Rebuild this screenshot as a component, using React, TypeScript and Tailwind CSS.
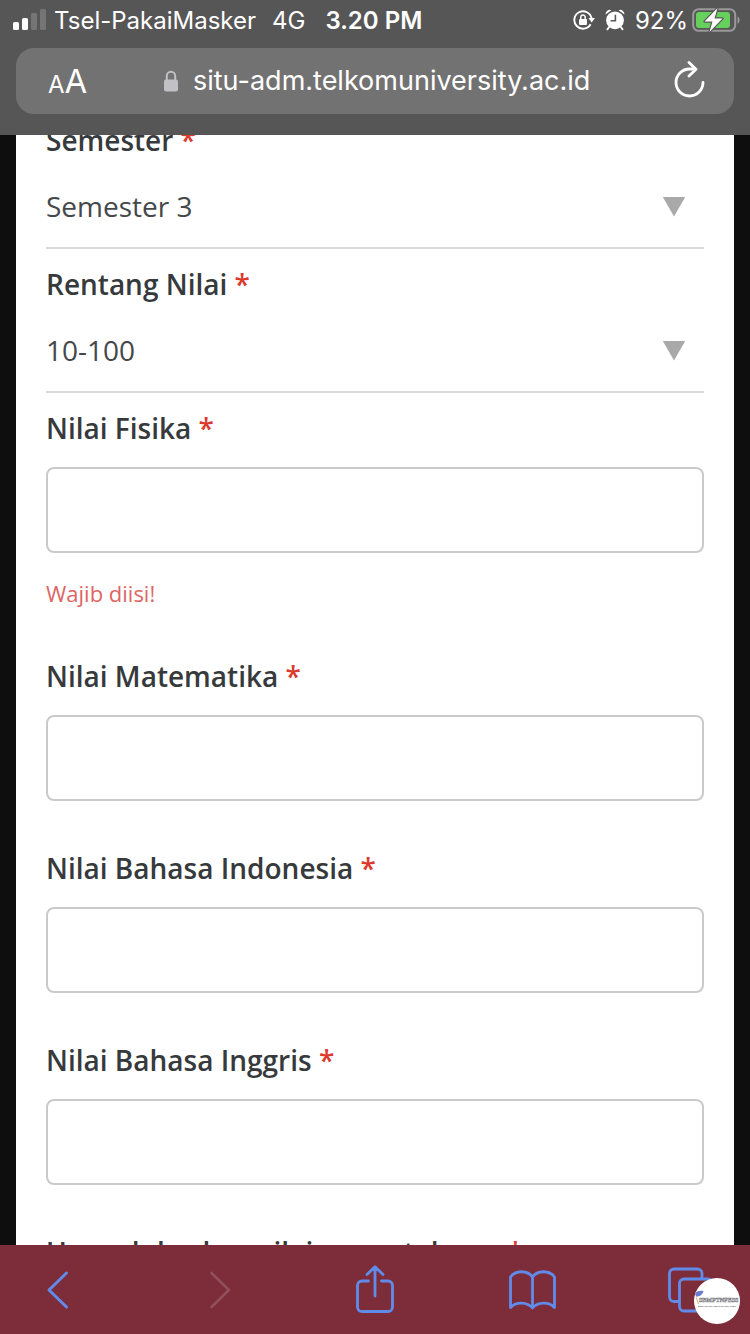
import React, { useState } from "react";

const labelClass = "block text-[28px] leading-[38px] font-semibold text-[#373a3c]";
const iconButton = "flex h-14 w-14 items-center justify-center";

function Required() {
  return <span className="text-[#dc3a2e]">*</span>;
}

function SelectField({ id, label, options }: { id: string; label: string; options: string[] }) {
  return (
    <div className="flex flex-col">
      <label htmlFor={id} className={labelClass}>
        {label} <Required />
      </label>
      <div className="relative mt-3 mb-4 border-b-2 border-[#dadada]">
        <select
          id={id}
          className="h-[76px] w-full appearance-none bg-transparent pb-1.5 text-[28px] text-[#45484b] outline-none"
        >
          {options.map((o) => (
            <option key={o}>{o}</option>
          ))}
        </select>
        <svg
          className="pointer-events-none absolute top-[26px] right-[18px]"
          width="24"
          height="20"
          viewBox="0 0 24 20"
          aria-hidden="true"
        >
          <path d="M.8 0h22.4L12 19.5z" fill="#a9a9a9" />
        </svg>
      </div>
    </div>
  );
}

function ScoreField({ id, label, error }: { id: string; label: string; error?: string }) {
  const [value, setValue] = useState("");
  return (
    <div className="mb-10 flex flex-col">
      <label htmlFor={id} className={labelClass}>
        {label} <Required />
      </label>
      <input
        id={id}
        value={value}
        onChange={(e) => setValue(e.target.value)}
        inputMode="numeric"
        className="mt-5 mb-2 h-[86px] w-full rounded-lg border-2 border-[#cacaca] bg-white px-5 text-[28px] text-[#45484b] outline-none"
      />
      {error && <p className="mt-4 mb-2 text-[22px] leading-8 text-[#dd6664]">{error}</p>}
    </div>
  );
}

function StatusBar() {
  return (
    <div className="flex h-10 items-center justify-between pr-2.5 pl-3 text-[24px] leading-10">
      <div className="flex items-center">
        <svg width="34" height="22" viewBox="0 0 34 22" className="mr-2" aria-label="Signal">
          <rect x="1" y="13" width="6" height="8" rx="1.5" fill="#fff" />
          <rect x="10" y="9" width="6" height="12" rx="1.5" fill="#fff" />
          <rect x="19" y="4" width="6" height="17" rx="1.5" fill="#757575" />
          <rect x="28" y="0" width="6" height="21" rx="1.5" fill="#757575" />
        </svg>
        <span className="pt-0.5">Tsel-PakaiMasker</span>
        <span className="ml-4 pt-0.5">4G</span>
        <span className="ml-5 pt-0.5 font-semibold">3.20 PM</span>
      </div>
      <div className="flex items-center">
        <svg width="22" height="22" viewBox="0 0 22 22" className="mr-2.5" aria-label="Rotation lock">
          <path d="M18.6 9.500A8.700 8.700 0 1 0 17.600 15.300" fill="none" stroke="#fff" strokeWidth="1.9" />
          <path d="M15.400 9h6.600l-3.300 4.600z" fill="#fff" />
          <rect x="6" y="10" width="8" height="6" rx="1" fill="#fff" />
          <path d="M7.800 10.500V8.300a2.200 2.200 0 0 1 4.400 0v2.200" fill="none" stroke="#fff" strokeWidth="1.500" />
        </svg>
        <svg width="20" height="22" viewBox="0 0 20 22" className="mr-2.5" aria-label="Alarm">
          <circle cx="10" cy="11.300" r="8.900" fill="#fff" />
          <path d="M.6 5.600A4.200 4.200 0 0 1 6.400 1.200zM19.400 5.600a4.200 4.200 0 0 0-5.800-4.400z" fill="#fff" />
          <path d="m4.200 18-1.800 2.400M15.800 18l1.800 2.400" stroke="#fff" strokeWidth="1.800" strokeLinecap="round" />
          <path d="M10.400 5.800v6H5.600" fill="none" stroke="#585857" strokeWidth="1.600" />
        </svg>
        <span className="pt-0.5">92%</span>
        <svg width="48" height="26" viewBox="0 0 48 26" className="ml-1" aria-label="Battery">
          <rect x="1.200" y="2.200" width="42" height="21.600" rx="5.500" fill="none" stroke="#99999b" strokeWidth="2" />
          <path d="M45.500 9.200c2.800 1.400 2.800 6.200 0 7.600z" fill="#99999b" />
          <rect x="4" y="5" width="34" height="16" rx="3" fill="#65d05c" />
          <path
            d="M25.500 1 12.500 14.500h8L17.500 25 30.500 11.500h-8z"
            fill="#fff"
            stroke="#585857"
            strokeWidth="2.400"
            paintOrder="stroke"
            strokeLinejoin="round"
          />
        </svg>
      </div>
    </div>
  );
}

function AddressBar() {
  return (
    <div className="px-4 pt-2 pb-[21px]">
      <div className="flex h-[66px] items-center justify-between rounded-[18px] bg-[#737272] pr-4 pl-8">
        <button type="button" aria-label="Text size" className="flex items-baseline pt-1 leading-10">
          <span className="text-[24px]">A</span>
          <span className="text-[33px]">A</span>
        </button>
        <div className="flex items-center gap-3.5 pl-1 text-[27px] leading-10">
          <svg width="16" height="22" viewBox="0 0 16 22" aria-label="Secure">
            <rect x="1" y="9.500" width="14" height="12" rx="2" fill="#c1c0c5" />
            <path d="M3.800 10V6a4.200 4.200 0 0 1 8.400 0v4" fill="none" stroke="#c1c0c5" strokeWidth="2" />
          </svg>
          <span>situ-adm.telkomuniversity.ac.id</span>
        </div>
        <button type="button" aria-label="Reload" className={iconButton}>
          <svg width="34" height="40" viewBox="0 0 34 40" fill="none" stroke="#fff" strokeWidth="2.800" strokeLinecap="round" strokeLinejoin="round">
            <path d="M30 21.500A13.500 13.500 0 1 1 16.500 8l6 .2" />
            <path d="M16 1.500 23 8.300l-7 6.800" />
          </svg>
        </button>
      </div>
    </div>
  );
}

function BottomBar() {
  return (
    <nav className="relative flex h-[89px] shrink-0 items-start justify-between bg-[#7d2d3a] px-[30px] pt-[17px] text-[#618be9]">
      <button type="button" aria-label="Back" className={iconButton}>
        <svg width="24" height="40" viewBox="0 0 24 40" fill="none" stroke="currentColor" strokeWidth="3" strokeLinecap="round" strokeLinejoin="round">
          <path d="M20.500 3 3 20l17.500 17" />
        </svg>
      </button>
      <button type="button" aria-label="Forward" disabled className={iconButton}>
        <svg width="28" height="40" viewBox="0 0 28 40" fill="none" stroke="#904f5b" strokeWidth="2.600" strokeLinecap="round" strokeLinejoin="round">
          <path d="M8.500 3 26 20 8.500 37" />
        </svg>
      </button>
      <button type="button" aria-label="Share" className={iconButton}>
        <svg width="40" height="50" viewBox="0 0 40 50" fill="none" stroke="currentColor" strokeWidth="2.800" strokeLinecap="round" strokeLinejoin="round">
          <path d="M13.500 16H7a4.500 4.500 0 0 0-4.500 4.500V42A4.500 4.500 0 0 0 7 46.500h26a4.500 4.500 0 0 0 4.500-4.500V20.500A4.500 4.500 0 0 0 33 16h-6.500" />
          <path d="M20 31V2.500M12 9.500 20 1.700l8 7.800" />
        </svg>
      </button>
      <button type="button" aria-label="Bookmarks" className={iconButton}>
        <svg width="50" height="42" viewBox="0 0 50 42" fill="none" stroke="currentColor" strokeWidth="2.800" strokeLinecap="round" strokeLinejoin="round">
          <path d="M23.500 8C18.500 1 6.500 1 1.500 8v30.500c5-6 17-6 22 .5 5-6.500 17-6.500 22-.5V8c-5-7-17-7-22 0v31" />
        </svg>
      </button>
      <button type="button" aria-label="Tabs" className={iconButton}>
        <svg width="50" height="46" viewBox="0 0 50 46" fill="none" stroke="currentColor" strokeWidth="2.800" strokeLinejoin="round">
          <rect x="12.500" y="12" width="33" height="32" rx="4.500" />
          <path d="M12.500 34.500H7A4.500 4.500 0 0 1 2.500 30V6.500A4.500 4.500 0 0 1 7 2h23.500A4.500 4.500 0 0 1 35 6.500V12" />
        </svg>
      </button>
      <div className="absolute right-[10px] bottom-[10px] flex h-[46px] w-[46px] items-center justify-center overflow-hidden rounded-full bg-white">
        <svg width="46" height="46" viewBox="0 0 46 46" role="img" aria-label="SBMPTNFESS">
          <path d="M1 15.500c2-2.500 5-3 8.500-2.500-1 3.500-3 5.500-7.500 5.500z" fill="#6b7bd0" />
          <path d="m2 19 2.500 7" stroke="#d9b56b" strokeWidth="1" />
          <text x="5" y="24" fontSize="6" fontWeight="700" fontFamily="Liberation Serif, serif" fill="#fff" stroke="#77777c" strokeWidth=".5">SBMPTNFESS</text>
          <text x="4" y="29" fontSize="2.500" fontFamily="Liberation Sans, sans-serif" fill="#444">Base seputar SBMPTN dan UTBK</text>
        </svg>
      </div>
    </nav>
  );
}

export default function App() {
  return (
    <div className="flex h-screen flex-col overflow-hidden bg-[#0e0e0e] font-['Open_Sans',sans-serif]">
      <header className="shrink-0 bg-[#575656] font-['Inter',sans-serif] text-white">
        <StatusBar />
        <AddressBar />
      </header>
      <main className="mx-4 min-h-0 flex-1 overflow-hidden bg-white px-[30px]">
        <form className="-mt-[14px] flex flex-col">
          <SelectField id="semester" label="Semester" options={["Semester 3", "Semester 4"]} />
          <SelectField id="rentang" label="Rentang Nilai" options={["10-100", "1-4"]} />
          <ScoreField id="fisika" label="Nilai Fisika" error="Wajib diisi!" />
          <ScoreField id="matematika" label="Nilai Matematika" />
          <ScoreField id="indonesia" label="Nilai Bahasa Indonesia" />
          <ScoreField id="inggris" label="Nilai Bahasa Inggris" />
          <p className={labelClass}>
            Unggah berkas nilai pengetahuan <Required />
          </p>
        </form>
      </main>
      <BottomBar />
    </div>
  );
}
